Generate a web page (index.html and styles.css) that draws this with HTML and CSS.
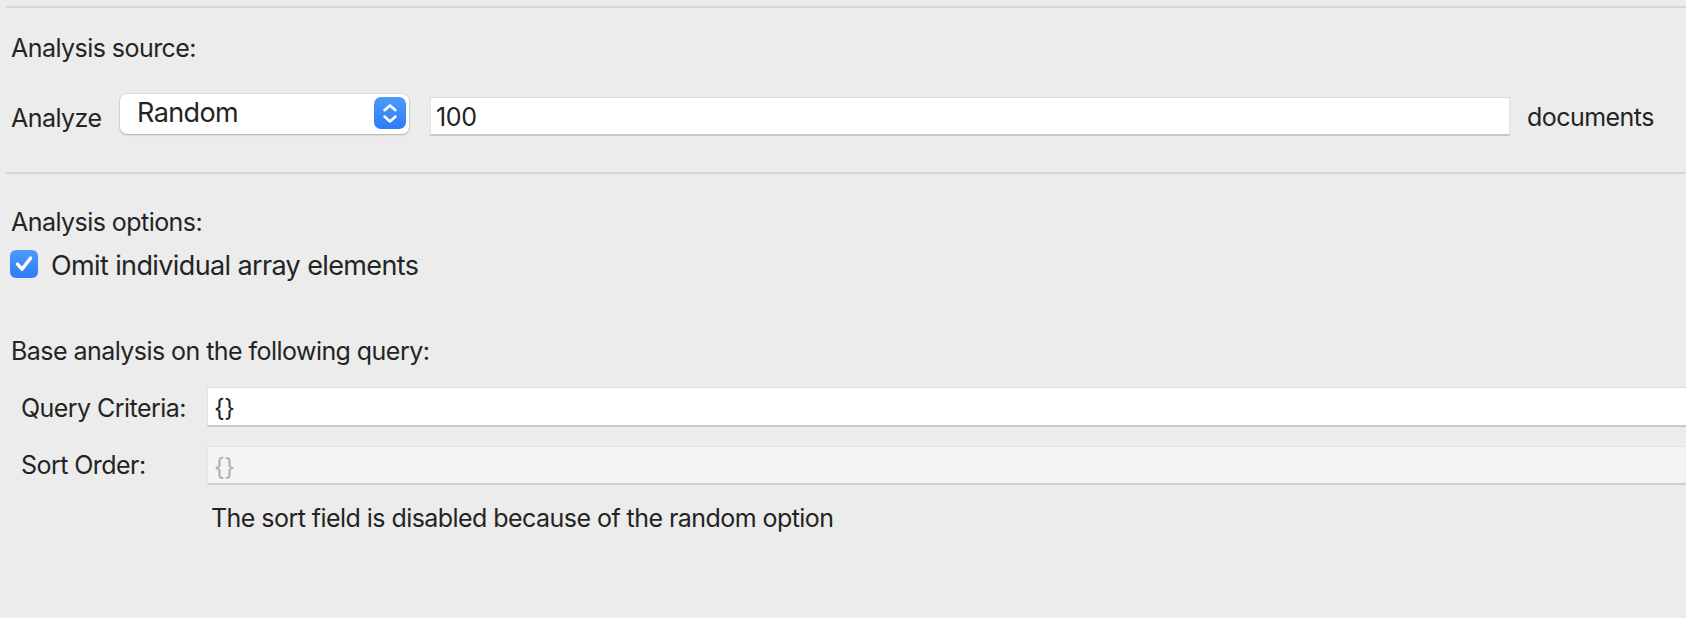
FILE: index.html
```html
<!DOCTYPE html>
<html>
<head>
<meta charset="utf-8">
<link rel="stylesheet" href="styles.css">
</head>
<body>
<div class="sep"></div>
<section class="source">
  <div class="label">Analysis source:</div>
  <div class="analyze-row">
    <span class="label analyze">Analyze</span>
    <div class="popup">
      <span class="popup-text">Random</span>
      <span class="stepper">
        <svg width="32" height="32" viewBox="0 0 32 32"><polyline points="10.5,13.2 16,8.4 21.5,13.2" fill="none" stroke="#fff" stroke-width="2.6" stroke-linecap="round" stroke-linejoin="round"/><polyline points="10.5,19.6 16,24.4 21.5,19.6" fill="none" stroke="#fff" stroke-width="2.6" stroke-linecap="round" stroke-linejoin="round"/></svg>
      </span>
    </div>
    <div class="field count">100</div>
    <span class="label docs">documents</span>
  </div>
</section>
<div class="sep sep2"></div>
<section class="options">
  <div class="label">Analysis options:</div>
  <div class="check-row">
    <span class="checkbox">
      <svg width="28" height="28" viewBox="0 0 28 28"><polyline points="7.5,14.2 12,19.2 20.5,8.2" fill="none" stroke="#fff" stroke-width="3.5" stroke-linecap="round" stroke-linejoin="round"/></svg>
    </span>
    <span class="check-text">Omit individual array elements</span>
  </div>
  <div class="label base">Base analysis on the following query:</div>
  <div class="form-row query-row">
    <span class="label row-label">Query Criteria:</span>
    <div class="field wide">{}</div>
  </div>
  <div class="form-row sort-row">
    <span class="label row-label">Sort Order:</span>
    <div class="field wide disabled">{}</div>
  </div>
  <div class="label helper">The sort field is disabled because of the random option</div>
</section>
</body>
</html>
```

FILE: styles.css
```css
html, body {
  margin: 0;
  padding: 0;
}
body {
  background: #ececec;
  font-family: Inter, "Noto Sans", sans-serif;
  color: #242424;
  width: 1686px;
  height: 618px;
  overflow: hidden;
  padding-top: 6px;
  box-sizing: border-box;
}
.sep {
  height: 2px;
  background: #d6d6d6;
  margin-left: 6px;
}
.label {
  font-size: 25px;
  letter-spacing: -0.55px;
  line-height: 32px;
  white-space: nowrap;
}
.source {
  padding-left: 11px;
  padding-top: 24px;
}
.analyze-row {
  display: flex;
  align-items: flex-start;
  margin-top: 30px;
  height: 42px;
}
.analyze {
  margin-top: 8px;
  width: 109px;
  flex: none;
}
.popup {
  width: 289px;
  height: 40px;
  flex: none;
  box-sizing: border-box;
  background: #fff;
  border-radius: 7px;
  box-shadow: 0 0 0 1px rgba(0,0,0,0.06), 0 1px 2px rgba(0,0,0,0.22);
  display: flex;
  align-items: flex-start;
  justify-content: space-between;
  padding: 3px 3px 0 17px;
}
.popup-text {
  font-size: 27px;
  letter-spacing: -0.6px;
  line-height: 32px;
}
.stepper {
  width: 32px;
  height: 32px;
  border-radius: 7px;
  background: linear-gradient(#4c9bf9, #2c7cf6);
  display: block;
}
.stepper svg, .checkbox svg {
  display: block;
}
.field {
  background: #fff;
  box-sizing: border-box;
  border-top: 1px solid #dcdcdc;
  border-left: 1px solid #e2e2e2;
  border-right: 1px solid #e2e2e2;
  border-bottom: 2px solid #c8c8c8;
  font-size: 25px;
  letter-spacing: -0.4px;
  line-height: 34px;
}
.count {
  margin-left: 21px;
  margin-top: 3px;
  width: 1080px;
  height: 39px;
  flex: none;
  padding-left: 5px;
  padding-top: 2px;
}
.docs {
  margin-left: 17px;
  margin-top: 7px;
}
.sep2 {
  margin-top: 36px;
}
.options {
  padding-left: 11px;
  padding-top: 32px;
}
.check-row {
  display: flex;
  align-items: flex-start;
  margin-top: 11px;
  height: 34px;
}
.checkbox {
  width: 28px;
  height: 28px;
  border-radius: 6px;
  background: linear-gradient(#4c9bf9, #2c7cf6);
  margin-top: 1px;
  margin-left: -1px;
  display: block;
  flex: none;
}
.check-text {
  font-size: 27px;
  letter-spacing: -0.62px;
  line-height: 34px;
  margin-left: 13px;
  white-space: nowrap;
}
.base {
  margin-top: 52px;
}
.form-row {
  display: flex;
  align-items: flex-start;
  padding-left: 10px;
}
.query-row {
  margin-top: 20px;
}
.sort-row {
  margin-top: 19px;
}
.row-label {
  width: 186px;
  flex: none;
}
.query-row .row-label {
  margin-top: 5px;
}
.sort-row .row-label {
  margin-top: 3px;
}
.wide {
  flex: 1;
  height: 40px;
  padding-left: 6px;
  padding-top: 3px;
  border-right: none;
}
.disabled {
  height: 39px;
  background: #f4f4f4;
  color: #b0b0b0;
  border-top-color: #e6e6e6;
  border-left-color: #e6e6e6;
  border-bottom-color: #d0d0d0;
}
.helper {
  margin-top: 17px;
  padding-left: 200px;
}
```
